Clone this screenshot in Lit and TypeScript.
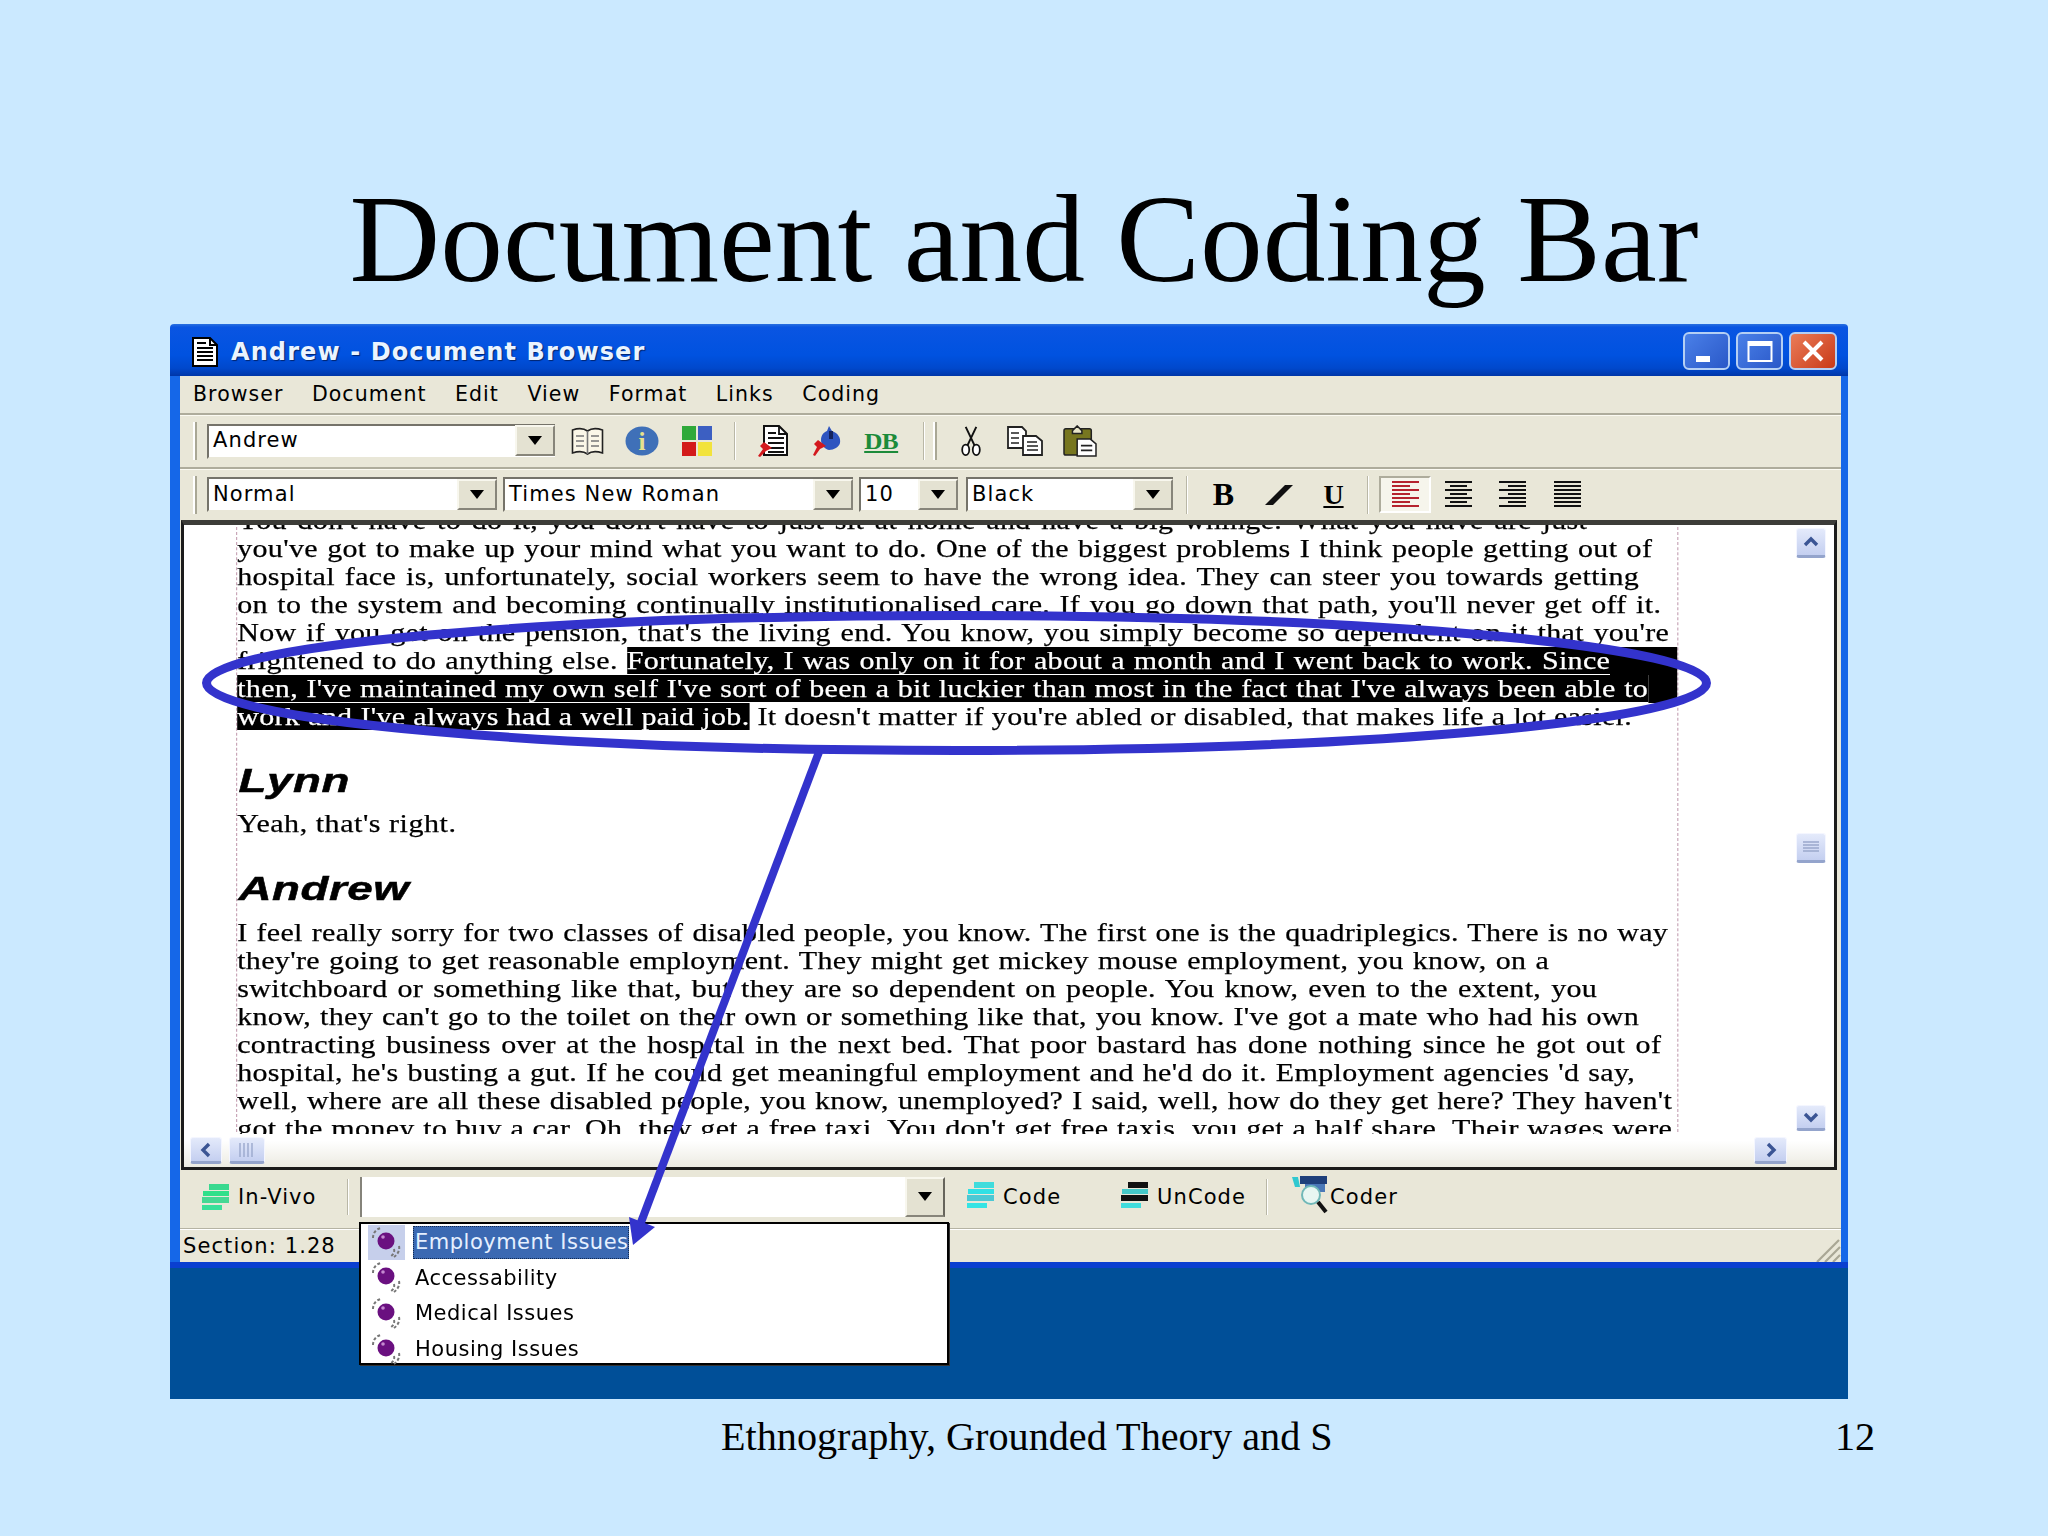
import { LitElement, html, css, svg } from "lit";
import { customElement } from "lit/decorators.js";

const SCALE = 1.2;
const LEFT = 237;

const stack = (c: string[]) => svg`<svg width="29" height="30" viewBox="0 0 29 30">
  <rect x="8" y="2" width="20" height="6" fill="${c[0]}"/><rect x="2" y="9" width="26" height="5" fill="${c[1]}"/>
  <rect x="1" y="15" width="27" height="6" fill="${c[2]}"/><rect x="1" y="23" width="20" height="5" fill="${c[3]}"/></svg>`;

const arrow = html`<svg width="14" height="9" viewBox="0 0 14 9"><path d="M0 0h14L7 9z" fill="#000"/></svg>`;

const align = (kind: string, color = "#111") => {
  const rows = [0, 1, 2, 3, 4, 5, 6];
  return svg`<svg width="29" height="29" viewBox="0 0 29 29">${rows.map((i) => {
    const short = i % 2 === 1;
    let x = 1, w = 27;
    if (kind === "left" && short) w = 18;
    if (kind === "center" && short) { x = 6; w = 17; }
    if (kind === "right" && short) { x = 10; w = 18; }
    return svg`<rect x="${x}" y="${i * 4 + 1}" width="${w}" height="2" fill="${color}"/>`;
  })}</svg>`;
};

const ball = html`<svg width="34" height="34" viewBox="0 0 34 34">
  <path d="M3 12C3 7 6 3 11 2" fill="none" stroke="#777" stroke-width="2" stroke-dasharray="3 2"/>
  <circle cx="16" cy="15" r="8.5" fill="#6a1080"/><circle cx="13" cy="11" r="1.8" fill="#c48ad0"/>
  <path d="M29 20c1 4-1 8-5 11M24 23c1 3-1 6-4 8" fill="none" stroke="#777" stroke-width="2" stroke-dasharray="3 2"/></svg>`;

const chev = (d: string) => html`<svg width="16" height="16" viewBox="0 0 16 16"><path d="${d}" fill="none" stroke="#3b5594" stroke-width="3.4"/></svg>`;
const UP = "M2 11l6-6 6 6", DOWN = "M2 5l6 6 6-6", LEFTA = "M11 2L5 8l6 6", RIGHTA = "M5 2l6 6-6 6";

const lineOf = (end: number, content: unknown, fill = false) => html`<div class="line">
  <div class="fit" style="width:${((end - LEFT) / SCALE).toFixed(1)}px">${content}</div>${fill ? html`<div class="fill"></div>` : ""}</div>`;

const para1: [number, string][] = [
  [1587, "You don't have to do it, you don't have to just sit at home and have a big whinge. What you have are just"],
  [1652, "you've got to make up your mind what you want to do. One of the biggest problems I think people getting out of"],
  [1639, "hospital face is, unfortunately, social workers seem to have the wrong idea. They can steer you towards getting"],
  [1661, "on to the system and becoming continually institutionalised care. If you go down that path, you'll never get off it."],
  [1669, "Now if you get on the pension, that's the living end. You know, you simply become so dependent on it that you're"],
];
const para2: [number, string][] = [
  [1668, "I feel really sorry for two classes of disabled people, you know. The first one is the quadriplegics. There is no way"],
  [1549, "they're going to get reasonable employment. They might get mickey mouse employment, you know, on a"],
  [1597, "switchboard or something like that, but they are so dependent on people. You know, even to the extent, you"],
  [1639, "know, they can't go to the toilet on their own or something like that, you know. I've got a mate who had his own"],
  [1661, "contracting business over at the hospital in the next bed. That poor bastard has done nothing since he got out of"],
  [1635, "hospital, he's busting a gut. If he could get meaningful employment and he'd do it. Employment agencies 'd say,"],
  [1672, "well, where are all these disabled people, you know, unemployed? I said, well, how do they get here? They haven't"],
  [1672, "got the money to buy a car. Oh, they get a free taxi. You don't get free taxis, you get a half share. Their wages were"],
];

@customElement("app-root")
export class AppRoot extends LitElement {
  static styles = css`
    :host { display: block; width: 2048px; height: 1536px; }
    * { box-sizing: border-box; }
    .slide { position: relative; width: 2048px; height: 1536px; background: #cbe9ff; display: flex; flex-direction: column; overflow: hidden; font-family: "DejaVu Sans", sans-serif; color: #000; }
    h1 { margin: 0; height: 324px; padding-top: 174px; font: 400 125.5px/130px "Liberation Serif", serif; text-align: center; white-space: nowrap; }

    .win { margin-left: 170px; width: 1678px; height: 1075px; display: flex; flex-direction: column; flex: none; filter: blur(.4px); }
    .titlebar { height: 52px; background: linear-gradient(#2a70e0 0, #0a55e2 6%, #0052e0 60%, #0048cc 85%, #0036a8 100%); display: flex; align-items: center; padding: 3px 11px 0 21px; color: #eaf4ff; font-weight: 700; font-size: 24px; letter-spacing: 1.1px; text-shadow: 1px 1px 1px #00246e; border-radius: 4px 4px 0 0; }
    .titlebar .name { margin-left: 12px; flex: 1; white-space: nowrap; }
    .wbtn { width: 47px; height: 38px; margin-left: 6px; margin-top: -1px; border: 2px solid #b4cff4; border-radius: 6px; background: linear-gradient(135deg, #4a80e8, #2a58c8); display: flex; align-items: center; justify-content: center; }
    .wbtn.close { background: linear-gradient(135deg, #ea7c58, #c93a18); width: 48px; }
    .clientwrap { background: #1567e8; padding: 0 7px 0 10px; }
    .client { height: 886px; background: #e9e7d8; display: flex; flex-direction: column; }
    .band { height: 6px; background: #0a3fd0; flex: none; }
    .tail { flex: 1; background: #004f98; }

    .menu { height: 37px; display: flex; align-items: center; gap: 28.5px; padding: 0 0 2px 13px; font-size: 20.5px; letter-spacing: 1.05px; white-space: nowrap; }
    .tbar { height: 54px; display: flex; align-items: center; padding-left: 13px; border-top: 2px solid #aeac9c; box-shadow: inset 0 1px 0 #fbfaf2; }
    .tbar.second { height: 53px; }
    .grip { width: 4px; height: 38px; border-left: 2px solid #fff; border-right: 2px solid #a9a795; background: #dcdac8; flex: none; }
    .sep { width: 2px; height: 38px; background: #b9b7a6; border-right: 1px solid #fff; flex: none; }
    .combo { height: 35px; background: #fff; border: 2px solid #75736a; border-right: none; border-bottom-color: #e9e7d8; display: flex; align-items: center; padding-left: 4px; font-size: 21px; letter-spacing: 1.1px; flex: none; white-space: nowrap; }
    .combo .txt { flex: 1; margin-top: -2px; }
    .dd { height: 100%; background: #e4e2d2; border: 2px solid; border-color: #f8f7ee #87857a #87857a #f8f7ee; display: flex; align-items: center; justify-content: center; flex: none; width: 40px; margin-top: -1px; }
    .c-andrew { width: 348px; margin-left: 10px; }
    .c-normal { width: 290px; margin-left: 10px; }
    .c-font { width: 350px; margin-left: 6px; }
    .c-size { width: 99px; margin-left: 6px; }
    .c-color { width: 207px; margin-left: 8px; }
    .tb { width: 54.5px; flex: none; display: flex; align-items: center; justify-content: center; }
    .first-tb { margin-left: 5.5px; }
    .sep.a { margin: 0 9.5px; }
    .sep.b { margin-left: 14px; }
    .grip.c { margin-left: 8px; margin-right: 7px; }
    .sep.d { margin: 0 8px 0 13px; }
    .sep.e { margin: 0 10px 0 6px; }
    .db { font: 700 24px "Liberation Serif", serif; color: #1c8b3a; text-decoration: underline; letter-spacing: -.5px; transform: scaleX(1.05); }
    .fmt { font: 700 32px "Liberation Serif", serif; width: 55px; }
    .fmt.i { font-style: italic; font-family: "Liberation Sans", sans-serif; font-size: 30px; }
    .fmt.u { text-decoration: underline; font-size: 28px; }
    .active { width: 52px; height: 37px; background: #f6f5ec; border: 2px solid; border-color: #aeac9c #fff #fff #aeac9c; flex: none; display: flex; align-items: center; justify-content: center; }

    .doc { height: 650px; margin: 0 4px 0 1px; border: 3px solid #1b1b1b; border-top: 5px solid #3c3c38; background: #fff; display: grid; grid-template-columns: 1612px 38px; grid-template-rows: 609px 33px; }
    .canvas { overflow: hidden; padding-left: 52px; }
    .col { width: 1201.7px; height: 640px; margin-top: -18px; transform: scaleX(1.2); transform-origin: 0 0; border-left: 1px dashed #c9a7b8; border-right: 1px dashed #c9a7b8; font: 400 25px/28px "Liberation Serif", serif; letter-spacing: .28px; -webkit-text-stroke: .25px #000; white-space: nowrap; }
    .line { height: 28px; display: flex; }
    .fit { flex: none; text-align: justify; text-align-last: justify; }
    .fill { flex: 1; background: #000; height: 28px; }
    .hl { background: #000; color: #fff; -webkit-text-stroke: .25px #fff; }
    .who { height: 48px; margin-top: 25px; font: italic 700 34px/48px "Liberation Sans", sans-serif; letter-spacing: .4px; padding-left: 1px; transform: scaleX(1.12); transform-origin: 0 0; -webkit-text-stroke: .5px #000; }
    .who.two { margin-top: 26px; margin-bottom: 7px; }
    .say { margin-top: 6px; height: 28px; letter-spacing: .45px; }
    .vs { display: flex; flex-direction: column; padding: 3px 8px 3px 0; align-items: flex-end; background: #fff; }
    .sb { background: linear-gradient(#e4eafb, #c4cff0); border: 1px solid #f4f6ff; border-bottom: 3px solid #94a4cc; border-radius: 3px; display: flex; align-items: center; justify-content: center; flex: none; }
    .vs .sb { width: 30px; height: 30px; }
    .vs .thumb { margin-top: 275px; }
    .vs .down { margin-top: auto; height: 26px; }
    .hs { grid-column: 1 / 3; display: flex; align-items: center; padding: 0 47px 0 6px; background: linear-gradient(#fff 20%, #ecebe2 100%); }
    .hs .sb { width: 32px; height: 27px; }
    .hs .thumb { width: 36px; margin-left: 7px; }
    .hs .right { margin-left: auto; width: 33px; }

    .coding { height: 53px; display: flex; align-items: center; padding: 1px 0 0 21px; font-size: 21px; letter-spacing: 1.1px; white-space: nowrap; }
    .lbl { flex: none; margin-left: 8px; }
    .coding .sep.x { margin-left: 29px; height: 36px; }
    .c-code { width: 585px; height: 40px; margin-left: 11px; border: none; border-left: 2px solid #85837a; padding: 0; }
    .c-code .dd { border-right-color: #67655c; }
    .l1 { width: 80px; margin-left: 8px; }
    .l2 { width: 58px; }
    .l3 { width: 90px; }
    .l4 { margin-left: 2px; }
    .ic2 { margin-left: 21px; flex: none; }
    .ic3 { margin-left: 59px; flex: none; }
    .ic4 { margin-left: 23px; flex: none; }
    .sep.y { margin-left: 19px; height: 36px; }
    .status { height: 39px; border-top: 0; display: flex; flex-direction: column; }
    .status .rule { margin-top: 5px; height: 2px; background: #b5b3a3; border-bottom: 1px solid #fff; flex: none; }
    .status .row { flex: 1; display: flex; align-items: center; justify-content: space-between; padding-left: 3px; font-size: 21px; letter-spacing: 1.1px; }
    .status .row svg { align-self: flex-end; }

    .foot { flex: 1; display: flex; padding: 15px 0 0 721px; font: 400 40.2px/46px "Liberation Serif", serif; white-space: nowrap; }
    .foot .fname { width: 614px; flex: none; }
    .foot .page { margin-left: 500px; }

    .list { position: absolute; left: 359px; top: 1222px; width: 590px; height: 143px; background: #fff; border: 2px solid #000; padding-top: 1px; font-size: 21px; letter-spacing: .5px; box-shadow: 1px 1px 0 #333; filter: blur(.4px); }
    .item { height: 35.6px; display: flex; align-items: center; padding-left: 7px; white-space: nowrap; }
    .item .ico { width: 37px; height: 35px; display: flex; align-items: center; justify-content: center; flex: none; }
    .item .t { margin-left: 8px; padding: 3px 0 3px 2px; height: 33px; line-height: 27px; }
    .item.on .ico { background: #c6cfeb; }
    .item.on .t { background: #3b69b2; color: #e6f0ff; outline: 1px dotted #12294f; outline-offset: -1px; }

    .over { position: absolute; inset: 0; width: 2048px; height: 1536px; pointer-events: none; }
  `;

  render() {
    return html`<div class="slide">
      <h1>Document and Coding Bar</h1>
      <div class="win">
        <div class="titlebar">
          <svg width="28" height="30" viewBox="0 0 28 30"><path d="M2 1h17l7 7v21H2z" fill="#fff" stroke="#000" stroke-width="2"/><path d="M19 1v7h7M6 6h9M6 11h16M6 15h16M6 19h16M6 23h16" fill="none" stroke="#000" stroke-width="2"/></svg>
          <span class="name">Andrew - Document Browser</span>
          <div class="wbtn"><svg width="30" height="30" viewBox="0 0 30 30"><rect x="4" y="20" width="14" height="6" fill="#fff"/></svg></div>
          <div class="wbtn"><svg width="30" height="28" viewBox="0 0 30 28"><rect x="3.5" y="5" width="23" height="19" fill="none" stroke="#fff" stroke-width="2"/><rect x="3" y="4" width="24" height="5" fill="#fff"/></svg></div>
          <div class="wbtn close"><svg width="28" height="28" viewBox="0 0 28 28"><path d="M5 5l18 18M23 5L5 23" stroke="#fff" stroke-width="4"/></svg></div>
        </div>
        <div class="clientwrap"><div class="client">
          <div class="menu"><span>Browser</span><span>Document</span><span>Edit</span><span>View</span><span>Format</span><span>Links</span><span>Coding</span></div>

          <div class="tbar">
            <div class="grip"></div>
            <div class="combo c-andrew"><span class="txt">Andrew</span><div class="dd">${arrow}</div></div>
            <div class="tb first-tb"><svg width="33" height="30" viewBox="0 0 33 30"><path d="M1.5 4c6-2 11-2 15 1 4-3 9-3 15-1v23c-6-2-11-2-15 1-4-3-9-3-15-1z" fill="#fbf7e8" stroke="#222" stroke-width="1.6"/><path d="M16.5 5v23M5 10h8M5 15h8M5 20h8M20 10h8M20 15h8M20 20h8" stroke="#777" stroke-width="1.6"/></svg></div>
            <div class="tb"><svg width="34" height="30" viewBox="0 0 34 30"><ellipse cx="17" cy="15" rx="16.5" ry="14.5" fill="#3f70b8"/><text x="17" y="24" text-anchor="middle" font-family="Liberation Serif" font-weight="700" font-size="25" fill="#e6e28c">i</text></svg></div>
            <div class="tb"><svg width="32" height="32" viewBox="0 0 32 32"><rect x="1" y="1" width="14" height="14" fill="#2fa93a"/><rect x="17" y="1" width="14" height="14" fill="#3c5fc2"/><rect x="1" y="17" width="14" height="14" fill="#d31a1a"/><rect x="17" y="17" width="14" height="14" fill="#f2e33c"/></svg></div>
            <div class="sep a"></div>
            <div class="tb"><svg width="33" height="32" viewBox="0 0 33 32"><path d="M8 1h15l8 8v21H8z" fill="#fff" stroke="#111" stroke-width="2"/><path d="M23 1v8h8M12 8h8M12 13h16M12 18h16M12 23h16M12 27h16" fill="none" stroke="#111" stroke-width="1.8"/><path d="M8 17l8 6-6 3-6 6-2-1 5-7-3-3z" fill="#d3191e"/></svg></div>
            <div class="tb"><svg width="31" height="32" viewBox="0 0 31 32"><path d="M18 1l3 5c6 2 9 7 8 12-1 4-6 7-11 7-5-1-8-6-8-10 0-5 3-8 6-9z" fill="#2f55c0"/><path d="M18 6h4v8h-4z" fill="#15245e"/><path d="M7 15l8 6-6 3-5 7-2-1 4-8-3-3z" fill="#d3191e"/></svg></div>
            <div class="tb"><span class="db">DB</span></div>
            <div class="sep b"></div>
            <div class="grip c"></div>
            <div class="tb"><svg width="22" height="30" viewBox="0 0 24 34"><path d="M6 1l10 21M18 1L8 22" stroke="#111" stroke-width="2.2" fill="none"/><ellipse cx="6" cy="27" rx="4" ry="6" fill="#fff" stroke="#111" stroke-width="2"/><ellipse cx="18" cy="27" rx="4" ry="6" fill="#fff" stroke="#111" stroke-width="2"/></svg></div>
            <div class="tb"><svg width="36" height="30" viewBox="0 0 36 30"><path d="M1 1h14l4 4v17H1z" fill="#fff" stroke="#222" stroke-width="1.8"/><path d="M16 10h13l6 5v14H16z" fill="#fff" stroke="#222" stroke-width="1.8"/><path d="M4 7h8M4 12h8M4 17h8M20 16h10M20 20h11M20 24h11" stroke="#222" stroke-width="1.6"/></svg></div>
            <div class="tb"><svg width="36" height="32" viewBox="0 0 36 34"><rect x="1" y="4" width="29" height="28" rx="2" fill="#77761f" stroke="#222" stroke-width="1.6"/><path d="M10 6l5-5 5 5v3H10z" fill="#e8e6c8" stroke="#222" stroke-width="1.6"/><path d="M15 15h14l6 5v13H15z" fill="#fff" stroke="#222" stroke-width="1.6"/><path d="M19 22h12M19 27h12" stroke="#222" stroke-width="1.8"/></svg></div>
          </div>

          <div class="tbar second">
            <div class="grip"></div>
            <div class="combo c-normal"><span class="txt">Normal</span><div class="dd">${arrow}</div></div>
            <div class="combo c-font"><span class="txt">Times New Roman</span><div class="dd">${arrow}</div></div>
            <div class="combo c-size"><span class="txt">10</span><div class="dd">${arrow}</div></div>
            <div class="combo c-color"><span class="txt">Black</span><div class="dd">${arrow}</div></div>
            <div class="sep d"></div>
            <div class="tb fmt">B</div>
            <div class="tb fmt i"><svg width="32" height="24" viewBox="0 0 32 24"><path d="M2 22h8L30 2h-8z" fill="#111"/></svg></div>
            <div class="tb fmt u">U</div>
            <div class="sep e"></div>
            <div class="active">${align("left", "#b5232e")}</div>
            <div class="tb">${align("center")}</div>
            <div class="tb">${align("right")}</div>
            <div class="tb">${align("full")}</div>
          </div>

          <div class="doc">
            <div class="canvas"><div class="col">
              ${para1.map(([e, t]) => lineOf(e, t))}
              ${lineOf(1610, html`frightened to do anything else. <span class="hl">Fortunately, I was only on it for about a month and I went back to work. Since</span>`, true)}
              ${lineOf(1648, html`<span class="hl">then, I've maintained my own self I've sort of been a bit luckier than most in the fact that I've always been able to</span>`, true)}
              ${lineOf(1632, html`<span class="hl">work and I've always had a well paid job.</span> It doesn't matter if you're abled or disabled, that makes life a lot easier.`)}
              <div class="who">Lynn</div>
              <div class="say">Yeah, that's right.</div>
              <div class="who two">Andrew</div>
              ${para2.map(([e, t]) => lineOf(e, t))}
            </div></div>
            <div class="vs">
              <div class="sb">${chev(UP)}</div>
              <div class="sb thumb"><svg width="18" height="14" viewBox="0 0 18 14"><path d="M1 2h16M1 5h16M1 8h16M1 11h16" stroke="#9aa8cc" stroke-width="1.4"/></svg></div>
              <div class="sb down">${chev(DOWN)}</div>
            </div>
            <div class="hs">
              <div class="sb">${chev(LEFTA)}</div>
              <div class="sb thumb"><svg width="20" height="16" viewBox="0 0 20 16"><path d="M3 1v14M7 1v14M11 1v14M15 1v14" stroke="#9aa8cc" stroke-width="1.4"/></svg></div>
              <div class="sb right">${chev(RIGHTA)}</div>
            </div>
          </div>

          <div class="coding">
            ${stack(["#39d98f", "#2fe08a", "#45d894", "#39e09a"])}<span class="lbl l1">In-Vivo</span>
            <div class="sep x"></div>
            <div class="combo c-code"><span class="txt"></span><div class="dd">${arrow}</div></div>
            <span class="ic2">${stack(["#40dcdc", "#30e0e4", "#4cc8d4", "#34e4e4"])}</span><span class="lbl l2">Code</span>
            <span class="ic3">${stack(["#111", "#45c8c8", "#111", "#40dcdc"])}</span><span class="lbl l3">UnCode</span>
            <div class="sep y"></div>
            <span class="ic4"><svg width="37" height="40" viewBox="0 0 37 40"><path d="M1 2h6l2 10H4z" fill="#30c8d0"/><rect x="9" y="1" width="27" height="8" fill="#1f3f7a"/><rect x="14" y="9" width="20" height="8" fill="#4a78b8"/><circle cx="20" cy="20" r="9" fill="#e8f6f2" stroke="#70b8b8" stroke-width="2"/><path d="M27 27l8 10" stroke="#111" stroke-width="4"/></svg></span><span class="lbl l4">Coder</span>
          </div>
          <div class="status">
            <div class="rule"></div>
            <div class="row"><span>Section: 1.28</span><svg width="26" height="24" viewBox="0 0 26 24"><path d="M2 24L24 2M10 24L25 9M18 24l7-7" stroke="#a9a795" stroke-width="2.2"/></svg></div>
          </div>
        </div></div>
        <div class="band"></div>
        <div class="tail"></div>
      </div>
      <div class="foot"><div class="fname">Ethnography, Grounded Theory and S</div><div class="page">12</div></div>

      <div class="list">
        ${["Employment Issues", "Accessability", "Medical Issues", "Housing Issues"].map(
          (t, i) => html`<div class="item ${i === 0 ? "on" : ""}"><div class="ico">${ball}</div><div class="t">${t}</div></div>`
        )}
      </div>

      <svg class="over" viewBox="0 0 2048 1536">
        <ellipse cx="956.5" cy="683" rx="750" ry="67.5" fill="none" stroke="#3333cc" stroke-width="9"/>
        <path d="M819 752L640 1225" stroke="#3333cc" stroke-width="8" fill="none"/>
        <path d="M633 1245L629 1217L655 1227Z" fill="#3333cc"/>
      </svg>
    </div>`;
  }
}
